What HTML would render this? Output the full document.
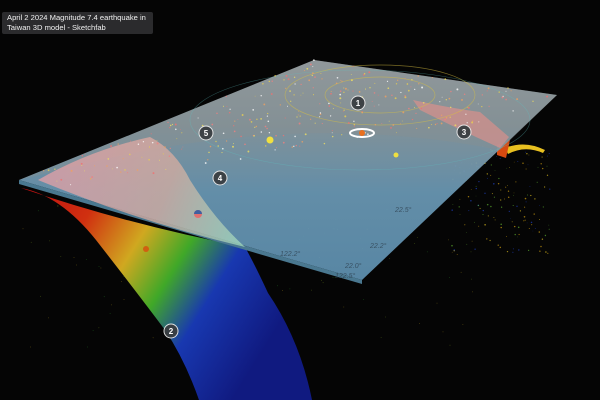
<!DOCTYPE html>
<html><head><meta charset="utf-8"><style>
html,body{margin:0;padding:0;background:#050505;width:600px;height:400px;overflow:hidden}
#t{position:absolute;left:2px;top:12px;width:151px;height:22px;background:#2b2b2d;border-radius:2px;color:#f0f0f0;font:7.6px/10px "Liberation Sans",sans-serif;padding:1px 0 0 5px;box-sizing:border-box;white-space:nowrap}
svg{position:absolute;left:0;top:0}
</style></head><body>
<svg id="s" width="600" height="400" viewBox="0 0 600 400">
<defs>
<linearGradient id="rb" x1="30" y1="190" x2="270" y2="340" gradientUnits="userSpaceOnUse">
<stop offset="0" stop-color="#c01010"/><stop offset="0.22" stop-color="#d03010"/><stop offset="0.42" stop-color="#d0a820"/><stop offset="0.58" stop-color="#40a828"/><stop offset="0.74" stop-color="#1838b0"/><stop offset="1" stop-color="#101a80"/>
</linearGradient>
<linearGradient id="pl" x1="0" y1="60" x2="0" y2="280" gradientUnits="userSpaceOnUse">
<stop offset="0" stop-color="#a0a8ac"/><stop offset="0.3" stop-color="#8a9ca4"/><stop offset="0.6" stop-color="#6a98b4"/><stop offset="1" stop-color="#5e90b0"/>
</linearGradient>
<linearGradient id="pk" x1="40" y1="160" x2="240" y2="240" gradientUnits="userSpaceOnUse">
<stop offset="0" stop-color="#f0a0a8"/><stop offset="0.6" stop-color="#e0b0a0"/><stop offset="1" stop-color="#a8e0c0"/>
</linearGradient>
</defs>
<g id="bg"></g>
<path d="M21 188 Q60 195 96 240 Q135 290 165 330 Q185 360 199 400 L312 400 Q300 340 268 293 Q255 265 245 247 Q130 225 21 188Z" fill="url(#rb)"/>
<path d="M505 148 Q525 140 545 150 L543 153 Q525 145 508 154Z" fill="#e8c020"/>
<path d="M497 145 L510 140 L506 158 L497 155Z" fill="#d84a10"/>
<path d="M314 60 L557 95 L362 280 L19 180 Z" fill="url(#pl)" opacity="0.93"/>
<path d="M314 60 L557 95 L500 150 Q300 110 80 165 L19 180Z" fill="#8a8e90" opacity="0.35"/>
<path d="M19 180 L362 280 L362 284 L19 184Z" fill="#4a7890"/>
<path d="M38 180 Q90 150 150 137 Q175 150 190 180 Q215 220 245 247 Q140 222 38 180Z" fill="url(#pk)" opacity="0.7"/>
<path d="M413 100 Q450 108 480 112 L509 137 L500 148 Q460 130 420 110Z" fill="#f09088" opacity="0.55"/>
<g fill="none" stroke="#d8c040" stroke-width="0.7" opacity="0.55">
<ellipse cx="380" cy="95" rx="95" ry="30"/><ellipse cx="380" cy="95" rx="55" ry="18"/>
</g>
<g fill="none" stroke="#60c0c0" stroke-width="0.6" opacity="0.4">
<ellipse cx="360" cy="120" rx="170" ry="50"/>
</g>
<g id="dots"></g>
<ellipse cx="362" cy="133" rx="12" ry="4" fill="none" stroke="#fff" stroke-width="2"/>
<circle cx="362" cy="133" r="3" fill="#e87020"/>
<circle cx="270" cy="140" r="3.5" fill="#f0e040"/>
<circle cx="396" cy="155" r="2.5" fill="#f0e040"/>
<circle cx="198" cy="214" r="4" fill="#e07070"/><path d="M194 214 A4 4 0 0 1 202 214Z" fill="#4060a0"/>
<circle cx="146" cy="249" r="3" fill="#d06010"/>
<g font-family="Liberation Sans,sans-serif" font-size="8" font-weight="bold" fill="#fff" text-anchor="middle">
<g stroke="#e8e8e8" stroke-width="1" fill="#3a3e42" opacity="0.95">
<circle cx="358" cy="103" r="7"/><circle cx="171" cy="331" r="7"/><circle cx="464" cy="132" r="7"/><circle cx="220" cy="178" r="7"/><circle cx="206" cy="133" r="7"/>
</g>
<text x="358" y="106">1</text><text x="171" y="334">2</text><text x="464" y="135">3</text><text x="220" y="181">4</text><text x="206" y="136">5</text>
</g>
<g font-family="Liberation Sans,sans-serif" font-size="7" fill="#2a3a48" opacity="0.7" font-style="italic">
<text x="370" y="248">22.2°</text><text x="395" y="212">22.5°</text><text x="345" y="268">22.0°</text><text x="335" y="278">122.5°</text><text x="280" y="256">122.2°</text>
</g>
</svg>
<div id="t">April 2 2024 Magnitude 7.4 earthquake in<br>Taiwan 3D model - Sketchfab</div>
<script>
var s=1;function r(){s=(s*16807)%2147483647;return s/2147483647;}
var ns="http://www.w3.org/2000/svg",d=document.getElementById('dots'),b=document.getElementById('bg');
function c(g,x,y,rad,col,o){var e=document.createElementNS(ns,'circle');e.setAttribute('cx',x);e.setAttribute('cy',y);e.setAttribute('r',rad);e.setAttribute('fill',col);if(o)e.setAttribute('opacity',o);g.appendChild(e);}
var cols=['#f0e060','#f07070','#e8d050','#f0a060','#ffffff','#f08080'];
for(var i=0;i<450;i++){var u=r(),v=r();var x=314+(557-314)*u+(19-314)*v,y=60+(95-60)*u+(180-60)*v;if(u+v>1.2)continue;c(d,x.toFixed(1),y.toFixed(1),(0.4+r()*0.6).toFixed(2),cols[(r()*6)|0],0.8);}
for(var i=0;i<160;i++){var x=450+r()*100,y=145+r()*110;c(b,x.toFixed(1),y.toFixed(1),(0.3+r()*0.5).toFixed(2),['#e0c020','#d0a010','#60b030','#2040c0'][(r()*4)|0],0.7);}
for(var i=0;i<100;i++){var x=20+r()*460,y=200+r()*150;c(b,x.toFixed(1),y.toFixed(1),0.4,['#c0a020','#80a020','#30a030'][(r()*3)|0],0.6);}
</script>
</body></html>
